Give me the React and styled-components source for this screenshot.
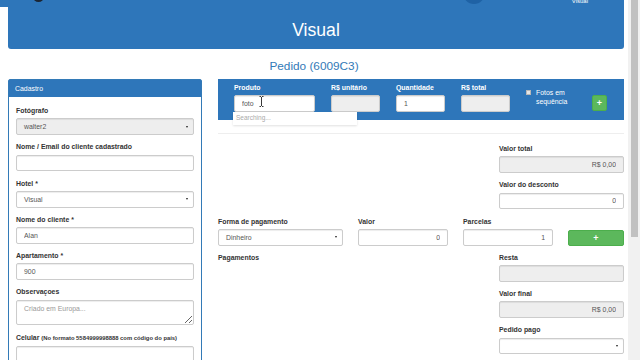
import React from 'react';
import styled, { createGlobalStyle } from 'styled-components';

const GlobalStyle = createGlobalStyle`
  html, body {
    margin: 0;
    padding: 0;
    background: #fff;
    font-family: "Liberation Sans", Arial, sans-serif;
  }
  * { box-sizing: border-box; }
`;

const BLUE = '#2e76ba';

const Page = styled.div`
  display: flex;
  height: 360px;
  overflow: hidden;
`;

const Main = styled.div`
  flex: 1;
  min-width: 0;
`;

const Scrollbar = styled.div`
  width: 12px;
  background: #f1f1f1;
  padding: 0 2px 0 3px;
`;

const Thumb = styled.div`
  height: 237px;
  background: #c1c1c1;
`;

/* bottom edge of the fixed navbar that sits over the page */
const NavStrip = styled.div`
  height: 7px;
  margin-right: 4px;
  background: ${BLUE};
  display: flex;
  align-items: flex-end;
  padding-bottom: 3px;
  overflow: hidden;
`;

const Avatar = styled.div`
  flex: none;
  width: 11px;
  height: 11px;
  border-radius: 50%;
  background: #1b2533;
  margin-left: 33px;
  margin-bottom: 2px;
`;

const NavBadge = styled.div`
  flex: none;
  width: 22px;
  height: 22px;
  border-radius: 50%;
  background: #1f62a5;
  margin-left: auto;
`;

const NavText = styled.span`
  flex: none;
  color: #fff;
  font-size: 6px;
  line-height: 6px;
  margin: 0 36px 0 87px;
`;

const Header = styled.div`
  margin: 0 4px 0 8px;
  height: 42px;
  background: ${BLUE};
  border-radius: 0 0 3px 3px;
  color: #fff;
  font-size: 17.6px;
  display: flex;
  align-items: center;
  justify-content: center;
  padding-top: 4px;
`;

const Title = styled.h3`
  margin: 0;
  padding: 11px 0 6px;
  text-align: center;
  color: #337ab7;
  font-weight: normal;
  font-size: 11.8px;
  line-height: 13px;
`;

const Content = styled.div`
  margin: 0 4px 0 8px;
  display: grid;
  grid-template-columns: 194px 1fr;
  column-gap: 16px;
  align-items: start;
`;

const Panel = styled.div`
  border: 1px solid #337ab7;
  border-radius: 2px;
  height: 320px;
`;

const PanelHeading = styled.div`
  height: 17px;
  background: ${BLUE};
  color: #fff;
  font-size: 6.9px;
  line-height: 17px;
  padding-left: 6px;
`;

const PanelBody = styled.div`
  padding: 9px 7px 0;
`;

const Group = styled.div`
  margin-bottom: 7.3px;
  width: ${({ $width }) => ($width ? `${$width}px` : 'auto')};
`;

const Label = styled.label`
  display: block;
  font-weight: bold;
  font-size: 6.9px;
  line-height: 9.8px;
  margin-bottom: 2.5px;
  color: ${({ $light }) => ($light ? '#fff' : '#333')};
  white-space: nowrap;
`;

const Small = styled.small`
  font-size: 85%;
`;

const Input = styled.input`
  display: block;
  width: 100%;
  height: 16.7px;
  border: 1px solid #ccc;
  border-radius: 2px;
  padding: 0 7px;
  font-family: inherit;
  font-size: 6.9px;
  color: #555;
  background: ${({ $disabled }) => ($disabled ? '#eee' : '#fff')};
  text-align: ${({ $right }) => ($right ? 'right' : 'left')};
  box-shadow: inset 0 1px 1px rgba(0, 0, 0, 0.075);
  outline: none;
  &::placeholder { color: #999; }
`;

const TextArea = styled.textarea`
  display: block;
  width: 100%;
  height: 25.5px;
  border: 1px solid #ccc;
  border-radius: 2px;
  padding: 3px 7px;
  font-family: inherit;
  font-size: 6.9px;
  line-height: 9px;
  color: #555;
  box-shadow: inset 0 1px 1px rgba(0, 0, 0, 0.075);
  outline: none;
  &::placeholder { color: #999; }
`;

const SelectBox = styled.div`
  display: flex;
  align-items: center;
  justify-content: space-between;
  height: 16.7px;
  border: 1px solid #ccc;
  border-radius: 2px;
  padding: 0 5px 0 7px;
  font-size: 6.9px;
  color: #555;
  background: ${({ $disabled }) => ($disabled ? '#eee' : '#fff')};
  box-shadow: inset 0 1px 1px rgba(0, 0, 0, 0.075);
`;

const Caret = styled.span`
  width: 0;
  height: 0;
  border-left: 1.5px solid transparent;
  border-right: 1.5px solid transparent;
  border-top: 2.5px solid #222;
`;

const RightCol = styled.div`
  display: flex;
  flex-direction: column;
`;

const ProductBar = styled.div`
  background: ${BLUE};
  height: 41px;
  padding: 4px 0 0 16px;
  display: grid;
  grid-template-columns: 81px 49px 49px 49px 50px 15px;
  grid-template-rows: 12.3px 16.7px;
  column-gap: 16px;
`;

const Cell = styled.div`
  position: relative;
  grid-column: ${({ $col }) => $col};
  grid-row: ${({ $row }) => $row};
`;

const BarLabel = styled(Label)`
  margin: 0;
`;

const Dropdown = styled.div`
  position: absolute;
  left: -1px;
  top: 16.5px;
  width: 124px;
  height: 13px;
  background: #fff;
  box-shadow: 0 1px 2px rgba(0, 0, 0, 0.12);
  color: #aaa;
  font-size: 6.5px;
  line-height: 12px;
  padding-left: 3px;
  z-index: 2;
`;

const Cursor = styled.svg`
  position: absolute;
  left: 25px;
  top: 1px;
`;

const CheckCell = styled.div`
  grid-column: 5;
  grid-row: 1 / 3;
  display: flex;
  gap: 5px;
  padding-top: 5px;
  color: #fff;
  font-size: 6.9px;
  line-height: 9px;
`;

const Check = styled.span`
  flex: none;
  width: 5px;
  height: 5px;
  margin-top: 2px;
  background: #e6e6e6;
  border: 1px solid #b8b8b8;
`;

const AddButton = styled.button`
  grid-column: ${({ $col }) => $col || 'auto'};
  grid-row: ${({ $row }) => $row || 'auto'};
  height: 16px;
  border: 1px solid #4cae4c;
  border-radius: 2px;
  background: #5cb85c;
  color: #fff;
  font-family: inherit;
  font-weight: bold;
  font-size: 9px;
  line-height: 12px;
  padding: 0;
  display: flex;
  align-items: center;
  justify-content: center;
`;

const Divider = styled.hr`
  margin: 13px 0 10px;
  border: 0;
  border-top: 1px solid #eee;
`;

const Summary = styled.div`
  display: flex;
  flex-direction: column;
  align-items: flex-end;
`;

const PaymentRow = styled.div`
  display: grid;
  grid-template-columns: 125px 90px 90px 1fr;
  column-gap: 15px;
  align-items: end;
  margin-bottom: 7.3px;
`;

const FieldStack = styled.div`
  display: flex;
  flex-direction: column;
`;

const BottomRow = styled.div`
  display: flex;
  justify-content: space-between;
  align-items: flex-start;
`;

const Field = ({ label, children, width }) => (
  <Group $width={width}>
    <Label>{label}</Label>
    {children}
  </Group>
);

export default function App() {
  return (
    <>
      <GlobalStyle />
      <Page>
        <Main>
          <NavStrip>
            <Avatar />
            <NavBadge />
            <NavText>Visual</NavText>
          </NavStrip>
          <Header>Visual</Header>
          <Title>Pedido (6009C3)</Title>
          <Content>
            <Panel>
              <PanelHeading>Cadastro</PanelHeading>
              <PanelBody>
                <Field label="Fotógrafo">
                  <SelectBox $disabled>
                    <span>walter2</span>
                    <Caret />
                  </SelectBox>
                </Field>
                <Field label="Nome / Email do cliente cadastrado">
                  <Input readOnly value="" />
                </Field>
                <Field label="Hotel *">
                  <SelectBox>
                    <span>Visual</span>
                    <Caret />
                  </SelectBox>
                </Field>
                <Field label="Nome do cliente *">
                  <Input readOnly value="Alan" />
                </Field>
                <Field label="Apartamento *">
                  <Input readOnly value="900" />
                </Field>
                <Field label="Observaçoes">
                  <TextArea readOnly placeholder="Criado em Europa..." />
                </Field>
                <Group>
                  <Label>
                    Celular <Small>(No formato 5584999998888 com código do país)</Small>
                  </Label>
                  <Input readOnly value="" />
                </Group>
              </PanelBody>
            </Panel>

            <RightCol>
              <ProductBar>
                <Cell $col={1} $row={1}><BarLabel $light>Produto</BarLabel></Cell>
                <Cell $col={2} $row={1}><BarLabel $light>R$ unitário</BarLabel></Cell>
                <Cell $col={3} $row={1}><BarLabel $light>Quantidade</BarLabel></Cell>
                <Cell $col={4} $row={1}><BarLabel $light>R$ total</BarLabel></Cell>
                <Cell $col={1} $row={2}>
                  <Input readOnly value="foto" />
                  <Cursor width="5" height="11" viewBox="0 0 5 11">
                    <path d="M0.5 0.5h1.5M3 0.5h1.5M2.5 1v9M0.5 10.5h1.5M3 10.5h1.5" stroke="#222" strokeWidth="0.9" fill="none" />
                  </Cursor>
                  <Dropdown>Searching...</Dropdown>
                </Cell>
                <Cell $col={2} $row={2}><Input readOnly $disabled value="" /></Cell>
                <Cell $col={3} $row={2}><Input readOnly value="1" /></Cell>
                <Cell $col={4} $row={2}><Input readOnly $disabled value="" /></Cell>
                <CheckCell>
                  <Check />
                  <span>Fotos em<br />sequência</span>
                </CheckCell>
                <AddButton $col={6} $row={2}>+</AddButton>
              </ProductBar>

              <Divider />

              <Summary>
                <Field label="Valor total" width={125}>
                  <Input readOnly $disabled $right value="R$ 0,00" />
                </Field>
                <Field label="Valor do desconto" width={125}>
                  <Input readOnly $right value="0" />
                </Field>
              </Summary>

              <PaymentRow>
                <FieldStack>
                  <Label>Forma de pagamento</Label>
                  <SelectBox>
                    <span>Dinheiro</span>
                    <Caret />
                  </SelectBox>
                </FieldStack>
                <FieldStack>
                  <Label>Valor</Label>
                  <Input readOnly $right value="0" />
                </FieldStack>
                <FieldStack>
                  <Label>Parcelas</Label>
                  <Input readOnly $right value="1" />
                </FieldStack>
                <AddButton>+</AddButton>
              </PaymentRow>

              <BottomRow>
                <Label>Pagamentos</Label>
                <FieldStack>
                  <Field label="Resta" width={125}>
                    <Input readOnly $disabled $right value="" />
                  </Field>
                  <Field label="Valor final" width={125}>
                    <Input readOnly $disabled $right value="R$ 0,00" />
                  </Field>
                  <Field label="Pedido pago" width={125}>
                    <SelectBox>
                      <span />
                      <Caret />
                    </SelectBox>
                  </Field>
                </FieldStack>
              </BottomRow>
            </RightCol>
          </Content>
        </Main>
        <Scrollbar>
          <Thumb />
        </Scrollbar>
      </Page>
    </>
  );
}
